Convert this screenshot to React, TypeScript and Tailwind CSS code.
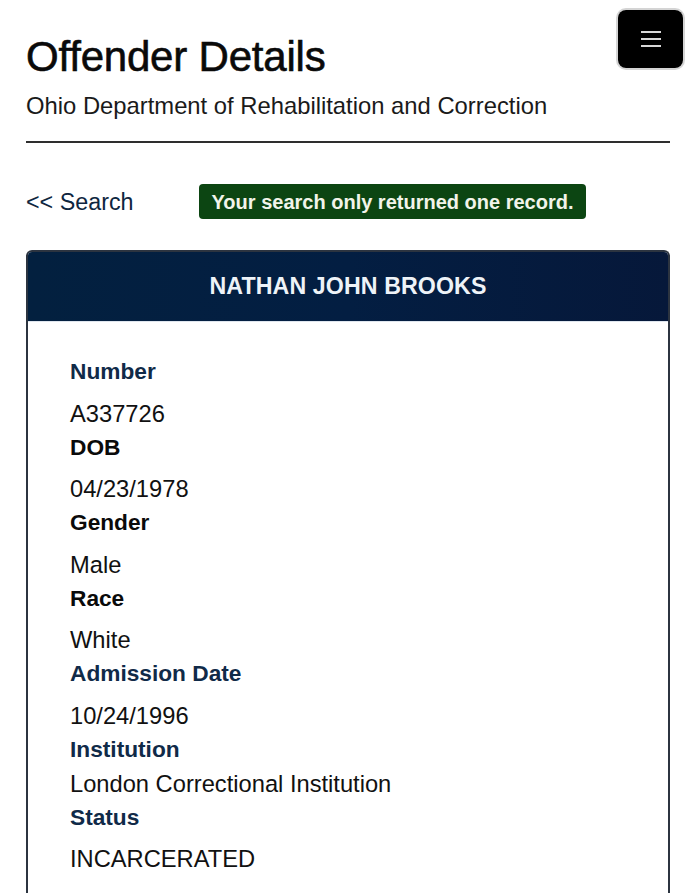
import React from "react";

type Row = { label: string; value: string; navy: boolean; tight?: boolean };

const rows: Row[] = [
  { label: "Number", value: "A337726", navy: true },
  { label: "DOB", value: "04/23/1978", navy: false },
  { label: "Gender", value: "Male", navy: false },
  { label: "Race", value: "White", navy: false },
  { label: "Admission Date", value: "10/24/1996", navy: true },
  { label: "Institution", value: "London Correctional Institution", navy: true, tight: true },
  { label: "Status", value: "INCARCERATED", navy: true },
];

export default function App() {
  return (
    <div
      className="min-h-screen bg-white text-[#111]"
      style={{ fontFamily: '"Liberation Sans", Arial, Helvetica, sans-serif' }}
    >
      <header className="flex items-start justify-between pl-[26px] pr-[11px] pt-[8px]">
        <div className="pt-[28px]">
          <h1 className="text-[42px] leading-[41px] font-normal tracking-[-0.2px] text-[#0a0a0a] [-webkit-text-stroke:0.6px_#0a0a0a]">
            Offender Details
          </h1>
          <p className="mt-[15px] text-[23.8px] leading-[28px] text-[#1a1a1a]">
            Ohio Department of Rehabilitation and Correction
          </p>
        </div>
        <div className="rounded-[10px] border-2 border-[#d4d4d4]">
          <button className="flex h-[58px] w-[65px] flex-col items-center justify-center gap-[5px] rounded-[8px] bg-black">
            <span className="block h-[2px] w-[20px] bg-[#d8d8d8]" />
            <span className="block h-[2px] w-[20px] bg-[#d8d8d8]" />
            <span className="block h-[2px] w-[20px] bg-[#d8d8d8]" />
          </button>
        </div>
      </header>

      <div className="px-[26px]">
        <div className="mt-[21px] h-[2px] bg-[#2e2e2e]" />

        <div className="mt-[41px] flex items-center">
          <a className="w-[173px] shrink-0 text-[23.3px] leading-[30px] text-[#0e2640]">&lt;&lt; Search</a>
          <div className="flex h-[35px] w-[387px] items-center justify-center rounded-[4px] bg-[#0c4512] text-[20px] font-bold text-[#f2f4ea]">
            Your search only returned one record.
          </div>
        </div>

        <div className="mt-[31px] overflow-hidden rounded-t-[6px] border-x-2 border-t-2 border-[#2c3440]">
          <div className="flex h-[69px] items-center justify-center bg-gradient-to-r from-[#03203f] via-[#031e42] to-[#06183a]">
            <span className="text-[23.2px] font-bold tracking-[0.1px] text-[#eef3f8]">NATHAN JOHN BROOKS</span>
          </div>
          <div className="border-t border-[#dfe6ee] bg-white pl-[42px] pt-[33px] pb-[60px]">
            {rows.map((r) => (
              <div key={r.label}>
                <div
                  className={`text-[22.7px] font-bold leading-[33.6px] ${
                    r.navy ? "text-[#102a48]" : "text-[#0a0a0a]"
                  } ${r.tight ? "" : "mb-[8px]"}`}
                >
                  {r.label}
                </div>
                <div className="text-[23.7px] leading-[34px] text-[#111]">{r.value}</div>
              </div>
            ))}
          </div>
        </div>
      </div>
    </div>
  );
}
